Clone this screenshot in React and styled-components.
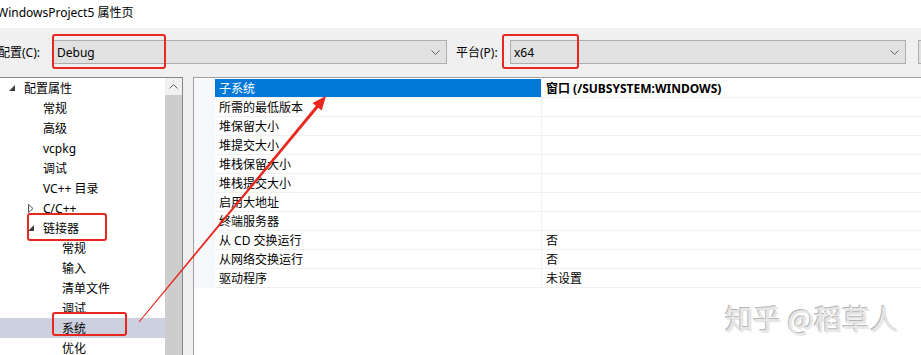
import React from "react";
import styled, { createGlobalStyle } from "styled-components";

const GlobalStyle = createGlobalStyle`
  html, body {
    margin: 0;
    padding: 0;
    background: #f0f0f0;
  }
  body {
    font-family: "Noto Sans", "Noto Sans CJK SC", sans-serif;
    font-size: 12px;
    color: #000;
    overflow: hidden;
  }
`;

// Dialog frame
const Dialog = styled.div`
  position: relative;
  width: 921px;
  height: 355px;
  overflow: hidden;
  background: #f0f0f0;
  display: flex;
  flex-direction: column;
`;

const TitleBar = styled.div`
  height: 28px;
  flex-shrink: 0;
  background: #fff;
  display: flex;
  align-items: center;
  padding: 0 0 3px 0;
  box-sizing: border-box;
  margin-left: -3px;
  font-size: 12px;
  line-height: 1;
`;

// Configuration / platform row
const ConfigRow = styled.div`
  display: flex;
  align-items: center;
  height: 24px;
  margin-top: 12px;
  flex-shrink: 0;
`;

const FieldLabel = styled.label`
  width: ${(p) => p.$width}px;
  flex-shrink: 0;
  margin-left: ${(p) => p.$offset || 0}px;
  font-size: 12px;
  white-space: nowrap;
`;

const Combo = styled.div`
  width: ${(p) => p.$width}px;
  flex-shrink: 0;
  height: 24px;
  box-sizing: border-box;
  margin-right: ${(p) => p.$gap || 0}px;
  border: 1px solid #adadad;
  background: #e1e1e1;
  display: flex;
  align-items: center;
  justify-content: space-between;
  padding: 0 6px 0 3px;
  font-size: 12px;
`;

const SideButton = styled.div`
  width: 30px;
  flex-shrink: 0;
  height: 24px;
  box-sizing: border-box;
  border: 1px solid #adadad;
  background: #e1e1e1;
`;

const Chevron = ({ up }) => (
  <svg width="9" height="5" viewBox="0 0 9 5">
    <polyline
      points={up ? "0.5,4.5 4.5,0.5 8.5,4.5" : "0.5,0.5 4.5,4.5 8.5,0.5"}
      fill="none"
      stroke="#606060"
      strokeWidth="1"
    />
  </svg>
);

// Body panels
const Body = styled.div`
  display: flex;
  flex: 1;
  min-height: 0;
  margin-top: 13px;
`;

const TreePanel = styled.div`
  width: 184px;
  flex-shrink: 0;
  margin-left: -1px;
  box-sizing: border-box;
  border: 1px solid #828790;
  border-bottom: none;
  background: #fff;
  display: flex;
`;

const TreeList = styled.div`
  flex: 1;
  display: flex;
  flex-direction: column;
`;

const TreeRow = styled.div`
  height: 20px;
  flex-shrink: 0;
  display: flex;
  align-items: center;
  padding-left: ${(p) => 9 + p.$level * 19}px;
  background: ${(p) => (p.$selected ? "#cdd0df" : "transparent")};
  white-space: nowrap;
`;

const Expander = styled.span`
  width: 15px;
  display: flex;
  align-items: center;
  flex-shrink: 0;
`;

const ScrollBar = styled.div`
  width: 17px;
  background: #f0f0f0;
  display: flex;
  flex-direction: column;
`;

const ScrollButton = styled.div`
  height: 17px;
  display: flex;
  align-items: center;
  justify-content: center;
`;

const ScrollThumb = styled.div`
  flex: 1;
  background: #cdcdcd;
`;

const GridPanel = styled.div`
  flex: 1;
  margin-left: 10px;
  border-top: 1px solid #a0a0a0;
  border-left: 1px solid #a0a0a0;
  background: #fff;
  padding-top: 1px;
`;

const GridRow = styled.div`
  display: grid;
  grid-template-columns: 21px 327px 1fr;
  height: 19px;
`;

const Gutter = styled.div`
  background: #f6f8fb;
`;

const Cell = styled.div`
  display: flex;
  align-items: center;
  padding-left: 4px;
  box-sizing: border-box;
  border-bottom: 1px solid #f0f0f0;
  border-right: ${(p) => (p.$name ? "1px solid #f0f0f0" : "none")};
  background: ${(p) => (p.$active ? "#0078d7" : "transparent")};
  color: ${(p) => (p.$active ? "#fff" : "#000")};
  font-weight: ${(p) => (p.$bold ? 700 : 400)};
  white-space: nowrap;
`;

// Annotation overlays (red boxes, arrow, watermark)
const Annotations = styled.div`
  position: absolute;
  inset: 0;
  pointer-events: none;
`;

const RedBox = styled.div`
  position: absolute;
  left: ${(p) => p.$x}px;
  top: ${(p) => p.$y}px;
  width: ${(p) => p.$w}px;
  height: ${(p) => p.$h}px;
  box-sizing: border-box;
  border: 2px solid #e8271f;
  border-radius: 3px;
`;

const ArrowLayer = styled.svg`
  position: absolute;
  left: 0;
  top: 0;
`;

const Watermark = styled.div`
  position: absolute;
  left: 725px;
  top: 298px;
  font-family: "Noto Sans CJK SC", sans-serif;
  font-size: 28px;
  color: #e6e6e6;
  text-shadow: -1px -1px 0 #b8b8b8, 1px 1px 1px rgba(0, 0, 0, 0.1);
  white-space: nowrap;
`;

const ExpandedIcon = () => (
  <svg width="6" height="6" viewBox="0 0 6 6">
    <polygon points="6,0 6,6 0,6" fill="#3c3c3c" />
  </svg>
);

const CollapsedIcon = () => (
  <svg width="6" height="9" viewBox="0 0 6 9">
    <polygon points="0.5,0.5 5,4.5 0.5,8.5" fill="none" stroke="#555" />
  </svg>
);

const treeItems = [
  { label: "配置属性", level: 0, state: "open" },
  { label: "常规", level: 1 },
  { label: "高级", level: 1 },
  { label: "vcpkg", level: 1 },
  { label: "调试", level: 1 },
  { label: "VC++ 目录", level: 1 },
  { label: "C/C++", level: 1, state: "closed" },
  { label: "链接器", level: 1, state: "open" },
  { label: "常规", level: 2 },
  { label: "输入", level: 2 },
  { label: "清单文件", level: 2 },
  { label: "调试", level: 2 },
  { label: "系统", level: 2, selected: true },
  { label: "优化", level: 2 },
];

const props = [
  { name: "子系统", value: "窗口 (/SUBSYSTEM:WINDOWS)", active: true, bold: true },
  { name: "所需的最低版本", value: "" },
  { name: "堆保留大小", value: "" },
  { name: "堆提交大小", value: "" },
  { name: "堆栈保留大小", value: "" },
  { name: "堆栈提交大小", value: "" },
  { name: "启用大地址", value: "" },
  { name: "终端服务器", value: "" },
  { name: "从 CD 交换运行", value: "否" },
  { name: "从网络交换运行", value: "否" },
  { name: "驱动程序", value: "未设置" },
];

const App = () => {
  return (
    <>
      <GlobalStyle />
      <Dialog>
        <TitleBar>WindowsProject5 属性页</TitleBar>

        <ConfigRow>
          <FieldLabel $width={55} $offset={-2}>配置(C):</FieldLabel>
          <Combo $width={394} $gap={9}>
            <span>Debug</span>
            <Chevron />
          </Combo>
          <FieldLabel $width={54}>平台(P):</FieldLabel>
          <Combo $width={396} $gap={12}>
            <span>x64</span>
            <Chevron />
          </Combo>
          <SideButton />
        </ConfigRow>

        <Body>
          <TreePanel>
            <TreeList>
              {treeItems.map((item, i) => (
                <TreeRow key={i} $level={item.level} $selected={item.selected}>
                  <Expander>
                    {item.state === "open" && <ExpandedIcon />}
                    {item.state === "closed" && <CollapsedIcon />}
                  </Expander>
                  {item.label}
                </TreeRow>
              ))}
            </TreeList>
            <ScrollBar>
              <ScrollButton>
                <Chevron up />
              </ScrollButton>
              <ScrollThumb />
            </ScrollBar>
          </TreePanel>

          <GridPanel>
            {props.map((p, i) => (
              <GridRow key={i}>
                <Gutter />
                <Cell $name $active={p.active}>
                  {p.name}
                </Cell>
                <Cell $bold={p.bold}>{p.value}</Cell>
              </GridRow>
            ))}
          </GridPanel>
        </Body>

        <Annotations>
          <RedBox $x={52} $y={34} $w={114} $h={35} />
          <RedBox $x={502} $y={34} $w={77} $h={35} />
          <RedBox $x={27} $y={213} $w={80} $h={28} />
          <RedBox $x={52} $y={312} $w={75} $h={24} />
          <ArrowLayer width="921" height="355" viewBox="0 0 921 355">
            <polygon
              points="139.4,322.3 318.3,107.8 321.7,110.6 326,96 312.5,103 315.9,105.8 138.6,321.7"
              fill="#e8271f"
            />
          </ArrowLayer>
          <Watermark>知乎 @稻草人</Watermark>
        </Annotations>
      </Dialog>
    </>
  );
};

export default App;
